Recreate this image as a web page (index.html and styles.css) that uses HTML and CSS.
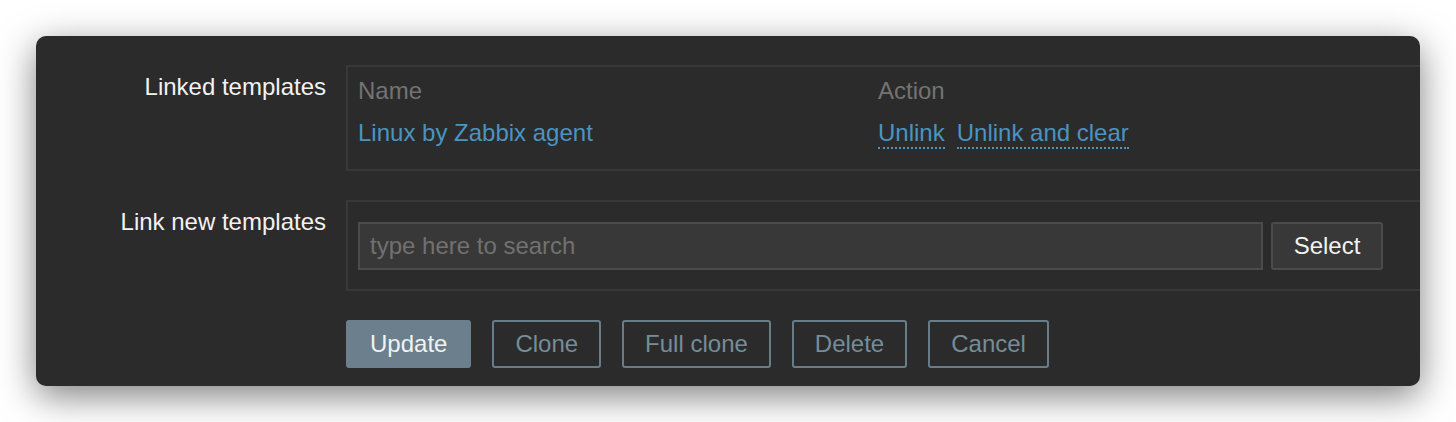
FILE: index.html
```html
<!DOCTYPE html>
<html lang="en">
<head>
<meta charset="utf-8">
<title>Templates</title>
<link rel="stylesheet" href="styles.css">
</head>
<body>
<div class="panel">
  <form class="form">
    <div class="label">Linked templates</div>
    <div class="box box-linked">
      <table class="tpl-table">
        <thead>
          <tr><th class="col-name">Name</th><th>Action</th></tr>
        </thead>
        <tbody>
          <tr>
            <td class="col-name"><a class="link" href="#">Linux by Zabbix agent</a></td>
            <td><a class="link dotted action" href="#">Unlink</a><a class="link dotted" href="#">Unlink and clear</a></td>
          </tr>
        </tbody>
      </table>
    </div>

    <div class="label">Link new templates</div>
    <div class="box box-new">
      <div class="multiselect">
        <input class="search" type="text" placeholder="type here to search">
        <button type="button" class="btn-select">Select</button>
      </div>
    </div>

    <div class="spacer"></div>
    <div class="buttons">
      <button type="button" class="btn btn-primary">Update</button>
      <button type="button" class="btn btn-alt">Clone</button>
      <button type="button" class="btn btn-alt">Full clone</button>
      <button type="button" class="btn btn-alt">Delete</button>
      <button type="button" class="btn btn-alt">Cancel</button>
    </div>
  </form>
</div>
</body>
</html>
```

FILE: styles.css
```css
html, body {
  margin: 0;
  padding: 0;
  background: #ffffff;
}

body {
  font-family: "Liberation Sans", Arial, sans-serif;
  font-size: 24px;
  line-height: 28px;
  min-height: 422px;
}

.panel {
  margin: 36px 0 0 36px;
  width: 1384px;
  height: 350px;
  box-sizing: border-box;
  background: #2b2b2b;
  border-radius: 10px;
  box-shadow: 0 10px 36px rgba(0, 0, 0, 0.5);
  overflow: hidden;
  padding-top: 29px;
}

.form {
  display: grid;
  grid-template-columns: 290px 1fr;
  column-gap: 20px;
  row-gap: 29px;
  margin: 0;
}

.label {
  color: #f2f2f2;
  text-align: right;
  padding-top: 8px;
  line-height: 28px;
}

.box {
  border: 2px solid #383838;
  border-right: none;
  box-sizing: border-box;
}

.box-linked {
  padding: 10px 10px 22px 10px;
}

.tpl-table {
  border-collapse: collapse;
}

.tpl-table th {
  color: #737373;
  font-weight: normal;
  text-align: left;
  padding: 0 0 14px 0;
  line-height: 28px;
}

.tpl-table td {
  padding: 0;
  line-height: 28px;
  vertical-align: top;
  white-space: nowrap;
}

.col-name {
  width: 520px;
}

.link {
  color: #4a94c2;
  text-decoration: none;
}

.dotted {
  padding-bottom: 1px;
  border-bottom: 2px dotted #4a94c2;
}

.action {
  margin-right: 12px;
}

.box-new {
  padding: 20px 10px 19px 10px;
}

.multiselect {
  display: flex;
  gap: 8px;
  align-items: stretch;
}

.search {
  width: 905px;
  height: 48px;
  box-sizing: border-box;
  margin: 0;
  background: #383838;
  border: 2px solid #4b4b4b;
  color: #f2f2f2;
  font-family: "Liberation Sans", Arial, sans-serif;
  font-size: 24px;
  padding: 0 10px;
  outline: none;
}

.search::placeholder {
  color: #717171;
}

.btn-select {
  width: 112px;
  height: 48px;
  box-sizing: border-box;
  margin: 0;
  background: #383838;
  border: 2px solid #4b4b4b;
  border-radius: 3px;
  color: #f2f2f2;
  font-family: "Liberation Sans", Arial, sans-serif;
  font-size: 24px;
  padding: 0;
}

.buttons {
  display: flex;
  gap: 21px;
}

.btn {
  height: 48px;
  box-sizing: border-box;
  margin: 0;
  padding: 0 21px;
  border-radius: 3px;
  font-family: "Liberation Sans", Arial, sans-serif;
  font-size: 24px;
}

.btn-primary {
  background: #6b7f8c;
  border: 2px solid #6b7f8c;
  color: #f2f2f2;
  padding: 0 22px;
}

.btn-alt {
  background: #2b2b2b;
  border: 2px solid #687d8a;
  color: #768d99;
}
```
